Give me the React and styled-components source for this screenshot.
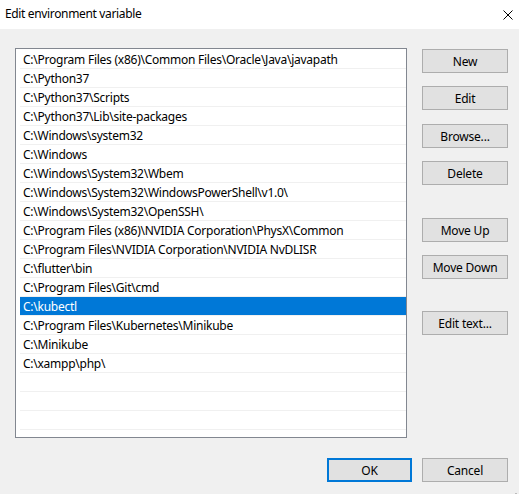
import React from 'react'
import styled, { createGlobalStyle } from 'styled-components'

const Global = createGlobalStyle`
body {
    margin: 0;
    background: #f0f0f0;
    font-family: "Noto Sans", "Open Sans", sans-serif;
    font-size: 12px;
    color: #000;
}
`

const Window = styled.div`
width: 519px;
height: 494px;
background: #f0f0f0;
display: flex;
flex-direction: column;
overflow: hidden;
position: relative;
`

const TitleBar = styled.div`
height: 29px;
background: #fff;
display: flex;
align-items: center;
justify-content: space-between;
padding-left: 5px;
box-sizing: border-box;
`

const Title = styled.span`
font-size: 12px;
color: #000;
margin-top: -2px;
letter-spacing: -0.35px;
`

const CloseBox = styled.div`
width: 46px;
height: 29px;
display: flex;
align-items: center;
justify-content: center;
margin-right: -12px;
`

const Body = styled.div`
display: flex;
padding: 19px 11px 0 15px;
gap: 15px;
`

const List = styled.div`
width: 392px;
height: 390px;
box-sizing: border-box;
border: 1px solid #828790;
background: #fff;
padding: 1px 0 0 4px;
overflow: hidden;
`

const Row = styled.div`
height: 17px;
padding-top: 1px;
line-height: 18px;
border-bottom: 1px solid #f0f0f0;
padding-left: 3px;
white-space: nowrap;
background: ${p => (p.selected ? '#0078d7' : '#fff')};
color: ${p => (p.selected ? '#fff' : '#000')};
letter-spacing: -0.25px;
`

const Side = styled.div`
display: flex;
flex-direction: column;
padding-top: 1px;
`

const Button = styled.button`
width: ${p => p.w || 86}px;
height: 24px;
box-sizing: border-box;
margin-top: ${p => p.top || 0}px;
background: #e1e1e1;
border: ${p => (p.primary ? '2px solid #0078d7' : '1px solid #adadad')};
font-family: inherit;
font-size: 12px;
letter-spacing: -0.2px;
color: #000;
padding: 0;
`

const Footer = styled.div`
display: flex;
justify-content: flex-end;
gap: 10px;
padding: 20px 11px 0 0;
`

const Grip = styled.div`
position: absolute;
right: 2px;
bottom: 2px;
width: 6px;
height: 6px;
`

const paths = [
  'C:\\Program Files (x86)\\Common Files\\Oracle\\Java\\javapath',
  'C:\\Python37',
  'C:\\Python37\\Scripts',
  'C:\\Python37\\Lib\\site-packages',
  'C:\\Windows\\system32',
  'C:\\Windows',
  'C:\\Windows\\System32\\Wbem',
  'C:\\Windows\\System32\\WindowsPowerShell\\v1.0\\',
  'C:\\Windows\\System32\\OpenSSH\\',
  'C:\\Program Files (x86)\\NVIDIA Corporation\\PhysX\\Common',
  'C:\\Program Files\\NVIDIA Corporation\\NVIDIA NvDLISR',
  'C:\\flutter\\bin',
  'C:\\Program Files\\Git\\cmd',
  'C:\\kubectl',
  'C:\\Program Files\\Kubernetes\\Minikube',
  'C:\\Minikube',
  'C:\\xampp\\php\\',
  '', '', '', '',
]

const App = () => {
  return (
    <Window>
      <Global />
      <TitleBar>
        <Title>Edit environment variable</Title>
        <CloseBox>
          <svg width="10" height="10" viewBox="0 0 10 10">
            <path d="M0.5 0.5 L9.5 9.5 M9.5 0.5 L0.5 9.5" stroke="#000" strokeWidth="1" />
          </svg>
        </CloseBox>
      </TitleBar>
      <Body>
        <List>
          {paths.map((p, i) => (
            <Row key={i} selected={i === 13}>{p}</Row>
          ))}
        </List>
        <Side>
          <Button>New</Button>
          <Button top={13}>Edit</Button>
          <Button top={14}>Browse...</Button>
          <Button top={13}>Delete</Button>
          <Button top={33}>Move Up</Button>
          <Button top={13}>Move Down</Button>
          <Button top={32}>Edit text...</Button>
        </Side>
      </Body>
      <Footer>
        <Button primary w={85}>OK</Button>
        <Button>Cancel</Button>
      </Footer>
      <Grip>
        <svg width="6" height="6" viewBox="0 0 6 6">
          <rect x="4" y="0" width="2" height="2" fill="#bcbcbc" />
          <rect x="0" y="4" width="2" height="2" fill="#bcbcbc" />
          <rect x="4" y="4" width="2" height="2" fill="#bcbcbc" />
        </svg>
      </Grip>
    </Window>
  )
}

export default App
